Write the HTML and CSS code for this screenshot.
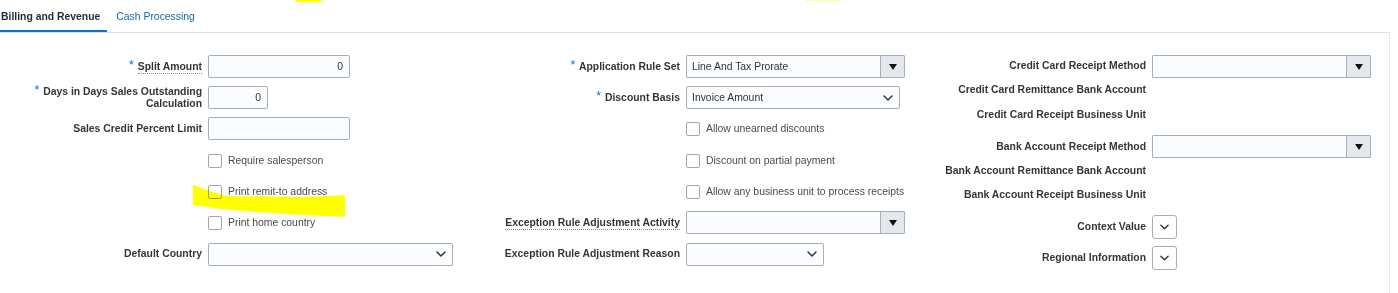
FILE: index.html
```html
<!DOCTYPE html>
<html lang="en">
<head>
<meta charset="utf-8">
<title>Billing and Revenue</title>
<link rel="stylesheet" href="styles.css">
</head>
<body>
<div class="page">
  <div class="tabs">
    <div class="tab active">Billing and Revenue</div>
    <div class="tab">Cash Processing</div>
  </div>

  <div class="panel">
    <!-- Column 1 -->
    <div class="col col1">
      <div class="row">
        <div class="lbl"><span class="req">*</span> <span class="dotted">Split Amount</span></div>
        <div class="input num w142">0</div>
      </div>
      <div class="row">
        <div class="lbl"><span class="req">*</span> Days in Days Sales Outstanding Calculation</div>
        <div class="input num w60">0</div>
      </div>
      <div class="row">
        <div class="lbl">Sales Credit Percent Limit</div>
        <div class="input w142"></div>
      </div>
      <div class="row">
        <div class="lbl"></div>
        <div class="check"><span class="box"></span><span>Require salesperson</span></div>
      </div>
      <div class="row">
        <div class="lbl"></div>
        <div class="check"><span class="box"></span><span>Print remit-to address</span></div>
      </div>
      <div class="row">
        <div class="lbl"></div>
        <div class="check"><span class="box"></span><span>Print home country</span></div>
      </div>
      <div class="row">
        <div class="lbl">Default Country</div>
        <div class="input select w245"><span class="val"></span><svg class="chev" viewBox="0 0 10 6" width="10" height="6"><polyline points="1,1 5,5 9,1"/></svg></div>
      </div>
    </div>

    <!-- Column 2 -->
    <div class="col col2">
      <div class="row">
        <div class="lbl"><span class="req">*</span> Application Rule Set</div>
        <div class="input combo w219"><span class="val">Line And Tax Prorate</span><span class="btn"><span class="tri"></span></span></div>
      </div>
      <div class="row">
        <div class="lbl"><span class="req">*</span> Discount Basis</div>
        <div class="input select w214"><span class="val">Invoice Amount</span><svg class="chev" viewBox="0 0 10 6" width="10" height="6"><polyline points="1,1 5,5 9,1"/></svg></div>
      </div>
      <div class="row">
        <div class="lbl"></div>
        <div class="check"><span class="box"></span><span>Allow unearned discounts</span></div>
      </div>
      <div class="row">
        <div class="lbl"></div>
        <div class="check"><span class="box"></span><span>Discount on partial payment</span></div>
      </div>
      <div class="row">
        <div class="lbl"></div>
        <div class="check"><span class="box"></span><span>Allow any business unit to process receipts</span></div>
      </div>
      <div class="row">
        <div class="lbl"><span class="dotted">Exception Rule Adjustment Activity</span></div>
        <div class="input combo w219"><span class="val"></span><span class="btn"><span class="tri"></span></span></div>
      </div>
      <div class="row">
        <div class="lbl">Exception Rule Adjustment Reason</div>
        <div class="input select w138"><span class="val"></span><svg class="chev" viewBox="0 0 10 6" width="10" height="6"><polyline points="1,1 5,5 9,1"/></svg></div>
      </div>
    </div>

    <!-- Column 3 -->
    <div class="col col3">
      <div class="row">
        <div class="lbl">Credit Card Receipt Method</div>
        <div class="input combo w219"><span class="val"></span><span class="btn"><span class="tri"></span></span></div>
      </div>
      <div class="row text">
        <div class="lbl">Credit Card Remittance Bank Account</div>
        <div></div>
      </div>
      <div class="row text">
        <div class="lbl">Credit Card Receipt Business Unit</div>
        <div></div>
      </div>
      <div class="row">
        <div class="lbl">Bank Account Receipt Method</div>
        <div class="input combo w219"><span class="val"></span><span class="btn"><span class="tri"></span></span></div>
      </div>
      <div class="row text">
        <div class="lbl">Bank Account Remittance Bank Account</div>
        <div></div>
      </div>
      <div class="row text">
        <div class="lbl">Bank Account Receipt Business Unit</div>
        <div></div>
      </div>
      <div class="row">
        <div class="lbl">Context Value</div>
        <div class="input mini"><svg class="chev" viewBox="0 0 10 6" width="9" height="6"><polyline points="1,1 5,5 9,1"/></svg></div>
      </div>
      <div class="row">
        <div class="lbl">Regional Information</div>
        <div class="input mini"><svg class="chev" viewBox="0 0 10 6" width="9" height="6"><polyline points="1,1 5,5 9,1"/></svg></div>
      </div>
    </div>
  </div>

  <!-- highlighter annotations drawn over the screenshot -->
  <div class="mark mark1"></div>
  <div class="mark mark2"></div>
  <svg class="highlight" viewBox="0 0 1398 293" width="1398" height="293">
    <path d="M193,185 C204,188 214,194 229,196 L300,197 C320,196.5 334,195.5 345,195 L345,217 C300,215 255,212.5 222,209 C210,207.5 200,206 193,205 Z"/>
  </svg>
</div>
</body>
</html>
```

FILE: styles.css
```css
* { box-sizing: border-box; }

html, body {
  margin: 0;
  padding: 0;
  background: #ffffff;
}

body {
  font-family: "Liberation Sans", Arial, sans-serif;
  font-size: 10.4px;
  color: #333333;
}

.page {
  position: relative;
  width: 1398px;
  height: 293px;
  overflow: hidden;
}

/* ---------- tabs ---------- */
.tabs {
  display: flex;
  width: 1390px;
  height: 33px;
  border-bottom: 1px solid #e0e0e0;
}

.tab {
  display: flex;
  align-items: center;
  height: 32px;
  padding: 3px 8px 0 9px;
  color: #156aa6;
  border-bottom: 2px solid transparent;
}

.tab.active {
  padding: 3px 7px 0 1px;
  font-weight: bold;
  color: #1f2c3b;
  border-bottom-color: #0b72c8;
}

/* ---------- panel ---------- */
.panel {
  display: grid;
  grid-template-columns: 484px 440px 1fr;
  width: 1390px;
  height: 260px;
  border-right: 1px solid #e6e6e6;
  padding: 17.6px 0 0 16px;
}

.col {
  display: flex;
  flex-direction: column;
}

.row {
  display: grid;
  grid-template-columns: var(--lw) auto;
  column-gap: 6px;
  align-items: center;
  justify-items: start;
  height: 31.33px;
}

.row.text {
  height: 24.5px;
  align-items: start;
  padding-top: 2.5px;
}

.col1 { --lw: 186px; }
.col2 { --lw: 180px; }
.col3 { --lw: 206px; }

.lbl {
  justify-self: stretch;
  text-align: right;
  font-weight: bold;
  color: #353535;
  line-height: 12px;
}

.req {
  color: #0b72c8;
  font-size: 12.5px;
  font-weight: normal;
  position: relative;
  top: -1px;
  margin-right: 1px;
}

.dotted {
  border-bottom: 1px dotted #8a8a8a;
  padding-bottom: 1px;
}

/* ---------- inputs ---------- */
.input {
  display: flex;
  align-items: center;
  height: 23px;
  border: 1px solid #a3afbb;
  border-radius: 2px;
  background: #fbfcfd;
  color: #333333;
  padding: 0 5px;
}

.input.num { justify-content: flex-end; padding-right: 6px; }

.w60 { width: 60px; }
.w138 { width: 138px; }
.w142 { width: 142px; }
.w214 { width: 214px; }
.w219 { width: 219px; }
.w245 { width: 245px; }

.input .val { flex: 1; }

.chev {
  fill: none;
  stroke: #333333;
  stroke-width: 1.5;
  stroke-linecap: round;
  stroke-linejoin: round;
  flex: none;
}

.select { padding-right: 6px; }

.combo {
  padding: 0 0 0 5px;
  border-radius: 1px;
}

.combo .btn {
  display: flex;
  align-items: center;
  justify-content: center;
  width: 24px;
  height: 100%;
  background: #e4e8ec;
  border-left: 1px solid #a3afbb;
}

.tri {
  width: 0;
  height: 0;
  border-left: 4px solid transparent;
  border-right: 4px solid transparent;
  border-top: 6px solid #111111;
  margin-top: 1px;
}

.mini {
  width: 25px;
  height: 24px;
  justify-content: center;
  padding: 0;
  border-radius: 3px;
  background: #ffffff;
}

/* ---------- checkboxes ---------- */
.check {
  display: flex;
  align-items: center;
  gap: 6px;
  color: #4a4a4a;
}

.check .box {
  width: 14px;
  height: 14px;
  border: 1px solid #9ca7b2;
  border-radius: 2px;
  background: #ffffff;
  margin-top: 1px;
}

/* ---------- annotation overlays ---------- */
.mark {
  position: absolute;
  top: 0;
  height: 2px;
}

.mark1 {
  left: 296px;
  width: 26px;
  background: #ffff00;
}

.mark2 {
  left: 805px;
  width: 35px;
  height: 1px;
  background: #ffff99;
}

.highlight {
  position: absolute;
  left: 0;
  top: 0;
  pointer-events: none;
  mix-blend-mode: multiply;
}

.highlight path {
  fill: #ffff00;
}
```
